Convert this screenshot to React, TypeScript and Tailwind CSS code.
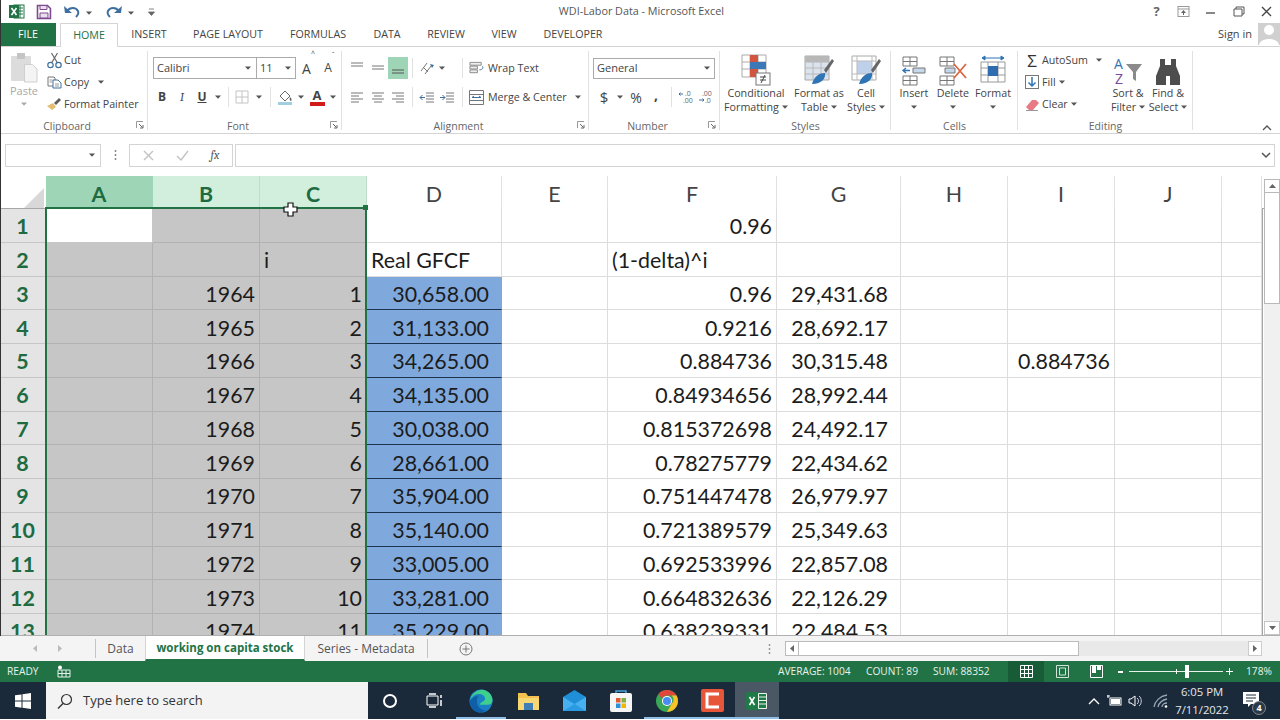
import React from 'react';

const Caret = ({ c = '#555' }: { c?: string }) => (
  <svg width="6" height="4" viewBox="0 0 6 4" className="inline-block shrink-0"><path d="M0 0.5h6L3 3.8z" fill={c} /></svg>
);

const XlLogo = ({ size = 17 }: { size?: number }) => (
  <svg width={size} height={size} viewBox="0 0 17 17">
    <rect x="6" y="2" width="10" height="13" fill="#fff" stroke="#217346" />
    <path d="M10 5h5M10 8h5M10 11h5M12 2v13" stroke="#217346" />
    <rect x="1" y="2" width="10" height="13" fill="#217346" />
    <path d="M3.5 5l5 7M8.5 5l-5 7" stroke="#fff" strokeWidth="1.6" />
  </svg>
);

const Launcher = () => (
  <svg width="8" height="8" viewBox="0 0 8 8" className="absolute right-[4px] top-[6px]">
    <path d="M0.5 7V0.5H7" fill="none" stroke="#999" />
    <path d="M3 3l3.5 3.5M7 4v3H4" fill="none" stroke="#666" />
  </svg>
);

const Group = ({ label, w, launcher, children }: { label: string; w: string; launcher?: boolean; children: React.ReactNode }) => (
  <div className={`relative flex h-full shrink-0 flex-col ${w}`}>
    <div className="min-h-0 flex-1">{children}</div>
    <div className={`relative h-[18px] text-center text-[10.5px] leading-[22px] text-[#666] ${launcher ? 'pr-[14px]' : ''}`}>
      {label}
      {launcher && <Launcher />}
    </div>
    <div className="absolute bottom-[3px] right-0 top-[4px] w-px bg-[#e1e1e1]" />
  </div>
);

const Sep = ({ ml }: { ml: string }) => <div className={`h-[20px] w-px shrink-0 bg-[#e1e1e1] ${ml}`} />;

const Lines = ({ d, c = '#777' }: { d: string; c?: string }) => (
  <svg width="16" height="14" viewBox="0 0 16 14"><path d={d} stroke={c} fill="none" /></svg>
);

const Slot = ({ w = 'w-[20px]', children }: { w?: string; children: React.ReactNode }) => (
  <div className={`flex h-full shrink-0 items-center justify-center ${w}`}>{children}</div>
);

const BigBtn = ({ w, icon, l1, l2, caret2, caret1 }: { w: string; icon: React.ReactNode; l1: string; l2?: string; caret1?: boolean; caret2?: boolean }) => (
  <div className={`flex shrink-0 flex-col items-center ${w}`}>
    <div className="flex h-[35px] items-end">{icon}</div>
    <div className="whitespace-nowrap text-[10.7px] leading-[14px] text-[#444]">{l1}</div>
    <div className="flex h-[14px] items-center gap-[3px] whitespace-nowrap text-[10.7px] leading-[14px] text-[#444]">
      {l2}
      {(caret2 || caret1) && <Caret />}
    </div>
  </div>
);

const tabs = [
  ['INSERT', 'w-[62px]'],
  ['PAGE LAYOUT', 'w-[96px]'],
  ['FORMULAS', 'w-[84px]'],
  ['DATA', 'w-[54px]'],
  ['REVIEW', 'w-[64px]'],
  ['VIEW', 'w-[52px]'],
  ['DEVELOPER', 'w-[86px]'],
];

const TitleBar = () => (
  <div className="flex h-[23px] items-center text-[#555]">
    <div className="ml-[8px] flex h-full items-center"><XlLogo /></div>
    <svg width="16" height="16" viewBox="0 0 16 16" className="ml-[11px]">
      <path d="M1.5 1.5h10l3 3v10h-13z" fill="none" stroke="#7b4a8c" strokeWidth="1.6" />
      <path d="M4 1.5h7v4H4zM4 9h8v5H4z" fill="#e9dff0" stroke="#7b4a8c" />
    </svg>
    <svg width="18" height="14" viewBox="0 0 18 14" className="ml-[11px]">
      <path d="M4 6c3-4 9-4 11 0 1 2 0 4-2 6" fill="none" stroke="#3f6f9f" strokeWidth="2" />
      <path d="M1 1l1 7h7z" fill="#3f6f9f" />
    </svg>
    <div className="ml-[5px]"><Caret /></div>
    <svg width="18" height="14" viewBox="0 0 18 14" className="ml-[13px]">
      <path d="M14 6C11 2 5 2 3 6c-1 2 0 4 2 6" fill="none" stroke="#3f6f9f" strokeWidth="2" />
      <path d="M17 1l-1 7H9z" fill="#3f6f9f" />
    </svg>
    <div className="ml-[5px]"><Caret /></div>
    <svg width="7" height="8" viewBox="0 0 7 8" className="ml-[14px]"><path d="M1 1h5M0.5 4h6L3.5 7.5z" stroke="#666" fill="#666" strokeWidth="0.8" /></svg>
    <div className="ml-[387px] w-[200px] whitespace-nowrap text-center text-[10.8px]">WDI-Labor Data - Microsoft Excel</div>
    <div className="ml-[402px] flex items-center">
      <div className="w-[27px] text-center text-[13px] font-bold text-[#666]">?</div>
      <svg width="27" height="11" viewBox="0 0 27 11"><rect x="8" y="0.5" width="11" height="10" fill="none" stroke="#999" /><path d="M8 3h11" stroke="#999" /><path d="M13.5 4l2.5 3h-5zM13 6.500h1V9h-1z" fill="#666" /></svg>
      <svg width="27" height="11" viewBox="0 0 27 11"><path d="M9 7h9" stroke="#555" strokeWidth="1.4" /></svg>
      <svg width="29" height="11" viewBox="0 0 29 11"><path d="M10 3h8v7h-8zM12 3V1h8v7h-2" fill="none" stroke="#555" /></svg>
      <svg width="27" height="11" viewBox="0 0 27 11"><path d="M9 1l9 9M18 1l-9 9" stroke="#444" strokeWidth="1.4" /></svg>
    </div>
  </div>
);

const TabRow = () => (
  <div className="flex h-[24px] items-stretch border-b border-[#d4d4d4] text-[10.7px]">
    <div className="flex w-[56px] items-center justify-center bg-[#217346] text-white">FILE</div>
    <div className="z-10 -mb-px ml-[4px] flex w-[58px] items-center justify-center border-x border-t border-[#d4d4d4] bg-white text-[#217346]">HOME</div>
    {tabs.map(([t, w]) => (
      <div key={t} className={`flex items-center justify-center text-[#444] ${w}`}>{t}</div>
    ))}
    <div className="flex-1" />
    <div className="flex items-center text-[11px] text-[#444]">Sign in</div>
    <svg width="22" height="22" viewBox="0 0 22 22" className="ml-[6px]">
      <rect width="22" height="22" fill="#d0d0d0" />
      <circle cx="11" cy="7" r="5" fill="#fff" />
      <path d="M1 22c1-8 19-8 20 0z" fill="#fff" />
    </svg>
  </div>
);

const Row2 = ({ children, className = '' }: { children: React.ReactNode; className?: string }) => (
  <div className={`flex h-[22px] items-center ${className}`}>{children}</div>
);

const SmallRow = ({ icon, label, caret, color = 'text-[#444]' }: { icon: React.ReactNode; label: string; caret?: string; color?: string }) => (
  <div className={`flex h-[22px] items-center text-[10.7px] ${color}`}>
    <div className="flex w-[18px] shrink-0 justify-center">{icon}</div>
    <span className="ml-[1px] whitespace-nowrap">{label}</span>
    {caret && <span className={`flex ${caret}`}><Caret /></span>}
  </div>
);

const Ribbon = () => (
  <div className="flex h-[87px] border-b border-[#d4d4d4] text-[#444]">
    <Group label="Clipboard" w="w-[148px]" launcher>
      <div className="flex pt-[2px]">
        <div className="flex w-[46px] flex-col items-center pl-[2px] pt-[4px] text-[11px] text-[#a8a8a8]">
          <svg width="28" height="30" viewBox="0 0 28 30">
            <rect x="1" y="3" width="20" height="25" rx="1" fill="#dcdcdc" />
            <rect x="7" y="0" width="8" height="6" fill="#c4c4c4" />
            <path d="M14.500 11.500h8l4.500 4.500v13h-12.500z" fill="#f4f4f4" stroke="#cfcfcf" />
          </svg>
          <div className="mt-[1px] leading-[14px]">Paste</div>
          <div className="mt-[4px] flex"><Caret c="#aaa" /></div>
        </div>
        <div className="-ml-[1px]">
          <SmallRow label="Cut" icon={<svg width="15" height="17" viewBox="0 0 15 17"><path d="M4.500 1l6 10M10.500 1l-6 10" stroke="#666" strokeWidth="1.200" fill="none" /><circle cx="3.500" cy="13" r="2.700" fill="none" stroke="#3f6f9f" strokeWidth="1.200" /><circle cx="11.500" cy="13" r="2.700" fill="none" stroke="#3f6f9f" strokeWidth="1.200" /></svg>} />
          <SmallRow label="Copy" caret="ml-[9px]" icon={<svg width="15" height="13" viewBox="0 0 15 13"><path d="M1 1h6l1 1v8H1z" fill="#fff" stroke="#777" /><path d="M6 4h5l3 3v5H6z" fill="#fff" stroke="#3f6f9f" /><path d="M2.500 4h3M2.500 6h3M8 8h4M8 10h4" stroke="#999" /></svg>} />
          <SmallRow label="Format Painter" icon={<svg width="16" height="14" viewBox="0 0 16 14"><path d="M1 9l6-3 3 4-4 3z" fill="#e2bd73" /><path d="M8 6l5-5 2 2-5 5z" fill="#5c5c5c" /></svg>} />
        </div>
      </div>
    </Group>

    <Group label="Font" w="w-[194px]" launcher>
      <div className="pl-[5px] pt-[10px]">
        <Row2>
          <div className="flex h-[22px] w-[104px] items-center justify-between border border-[#ababab] pl-[3px] pr-[5px] text-[11px]">Calibri<Caret /></div>
          <div className="-ml-px flex h-[22px] w-[40px] items-center justify-between border border-[#ababab] pl-[3px] pr-[4px] text-[11px]">11<Caret /></div>
          <div className="ml-[2px] flex w-[21px] justify-center text-[14px]">A<sup className="text-[7px]">^</sup></div>
          <div className="flex w-[21px] justify-center text-[12px] leading-[20px]">A<sup className="text-[7px]">ˇ</sup></div>
        </Row2>
        <Row2 className="mt-[7px]">
          <Slot w="w-[20px] ml-[-1px] font-bold text-[12px]">B</Slot>
          <Slot w="w-[20px] italic text-[12px] font-serif">I</Slot>
          <Slot w="w-[20px] underline text-[12px] font-bold">U</Slot>
          <Slot w="w-[12px]"><Caret /></Slot>
          <Sep ml="ml-[4px]" />
          <Slot w="w-[22px] ml-[2px]"><svg width="14" height="14" viewBox="0 0 14 14"><path d="M1 1h12v12H1zM7 1v12M1 7h12" fill="none" stroke="#c4c4c4" /></svg></Slot>
          <Slot w="w-[12px]"><Caret /></Slot>
          <Sep ml="ml-[5px]" />
          <Slot w="w-[24px] ml-[2px]"><svg width="16" height="16" viewBox="0 0 16 16"><path d="M3 7l5-5 5 5-5 5z" fill="#fff" stroke="#666" /><path d="M13 8c2 2 2 3 1 4-1 0-2-2-1-4z" fill="#666" /><rect x="1" y="13" width="14" height="3" fill="#9fcfe0" /></svg></Slot>
          <Slot w="w-[8px]"><Caret /></Slot>
          <Slot w="w-[22px] ml-[1px]"><div className="flex flex-col items-center"><span className="text-[13px] font-bold leading-[12px]">A</span><span className="mt-px h-[4px] w-[15px] bg-[#d11a1a]" /></div></Slot>
          <Slot w="w-[9px]"><Caret /></Slot>
        </Row2>
      </div>
    </Group>

    <Group label="Alignment" w="w-[247px]" launcher>
      <div className="pl-[5px] pt-[10px] text-[11px]">
        <Row2>
          <Slot w="w-[20px]"><Lines d="M2 2h12M2 5h12" /></Slot>
          <Slot w="w-[21px]"><Lines d="M2 5h12M2 8h12" /></Slot>
          <Slot w="w-[20px] bg-[#9fd5b7]"><Lines d="M2 9h12M2 12h12" c="#555" /></Slot>
          <Sep ml="ml-[4px]" />
          <Slot w="w-[18px] ml-[5px]"><svg width="16" height="14" viewBox="0 0 16 14"><path d="M2 10l6-8M6 13l6-8M4 6l5 5" stroke="#777" fill="none" /><path d="M11 3l4 1-2 3z" fill="#3f6f9f" /></svg></Slot>
          <Slot w="w-[11px]"><Caret /></Slot>
          <Sep ml="ml-[15px]" />
          <Slot w="w-[15px] ml-[6px]"><svg width="16" height="14" viewBox="0 0 16 14"><path d="M1 1h12v3H1zM1 5h8v3H1zM1 9h8v3H1z" fill="#eee" stroke="#888" /><path d="M14 5c2 2 0 4-3 4" stroke="#3f6f9f" fill="none" /></svg></Slot>
          <span className="ml-[4px] text-[10.7px]">Wrap Text</span>
        </Row2>
        <Row2 className="mt-[7px]">
          <Slot w="w-[20px]"><Lines d="M2 3h12M2 6h8M2 9h12M2 12h8" /></Slot>
          <Slot w="w-[21px]"><Lines d="M2 3h12M4 6h8M2 9h12M4 12h8" /></Slot>
          <Slot w="w-[20px]"><Lines d="M2 3h12M6 6h8M2 9h12M6 12h8" /></Slot>
          <Sep ml="ml-[4px]" />
          <Slot w="w-[20px] ml-[4px]"><svg width="16" height="14" viewBox="0 0 16 14"><path d="M7 3h8M7 6h8M7 9h8M7 12h8" stroke="#777" /><path d="M6 7.500H1M3.500 5L1 7.500 3.500 10" stroke="#3f6f9f" fill="none" /></svg></Slot>
          <Slot w="w-[20px]"><svg width="16" height="14" viewBox="0 0 16 14"><path d="M7 3h8M7 6h8M7 9h8M7 12h8" stroke="#777" /><path d="M1 7.500h5M3.500 5L6 7.500 3.500 10" stroke="#3f6f9f" fill="none" /></svg></Slot>
          <Sep ml="ml-[5px]" />
          <Slot w="w-[15px] ml-[6px]"><svg width="15" height="15" viewBox="0 0 15 15"><path d="M0.500 0.500h14v14H.5zM0.500 4.500h14M0.500 10.500h14" fill="none" stroke="#777" /><path d="M3 7.500h9M3 7.500l2-1.500M12 7.500l-2-1.500" stroke="#3f6f9f" fill="none" /></svg></Slot>
          <span className="ml-[4px] whitespace-nowrap text-[10.7px]">Merge &amp; Center</span>
          <span className="ml-[8px] flex"><Caret /></span>
        </Row2>
      </div>
    </Group>

    <Group label="Number" w="w-[131px]" launcher>
      <div className="pl-[4px] pt-[10px]">
        <Row2>
          <div className="flex h-[21px] w-[122px] items-center justify-between border border-[#ababab] pl-[3px] pr-[4px] text-[11px]">General<Caret /></div>
        </Row2>
        <Row2 className="mt-[7px]">
          <Slot w="w-[20px] ml-[1px] text-[15px]">$</Slot>
          <Slot w="w-[12px]"><Caret /></Slot>
          <Slot w="w-[20px] text-[14px]">%</Slot>
          <Slot w="w-[20px] pb-[6px] text-[14px] font-bold">,</Slot>
          <Sep ml="ml-[5px]" />
          <Slot w="w-[19px] ml-[5px]"><svg width="18" height="14" viewBox="0 0 18 14"><text x="7" y="6" fontSize="7" fill="#666">.0</text><text x="5" y="13" fontSize="7" fill="#666">.00</text><path d="M5 4H1M2.500 2.500L1 4l1.500 1.500" stroke="#3f6f9f" fill="none" /></svg></Slot>
          <Slot w="w-[20px]"><svg width="18" height="14" viewBox="0 0 18 14"><text x="5" y="6" fontSize="7" fill="#666">.00</text><text x="8" y="13" fontSize="7" fill="#666">.0</text><path d="M2 10h5M5.500 8.500L7 10l-1.500 1.500" stroke="#3f6f9f" fill="none" /></svg></Slot>
        </Row2>
      </div>
    </Group>

    <Group label="Styles" w="w-[171px]">
      <div className="flex pt-[4px]">
        <BigBtn w="w-[72px]" l1="Conditional" l2="Formatting" caret2 icon={
          <svg width="30" height="32" viewBox="0 0 30 32"><path d="M1 1h24v22H1zM9 1v22M17 1v22M1 8h24M1 15h24" fill="#fff" stroke="#aaa" /><path d="M9 1h8v7H9zM9 15h8v8H9z" fill="#d2553f" /><path d="M9 8h16v7H9z" fill="#3c78b5" /><rect x="15" y="19" width="14" height="12" fill="#fff" stroke="#777" /><path d="M19 23h6M19 26h6M24 21l-4 8" stroke="#444" /></svg>
        } />
        <BigBtn w="w-[54px]" l1="Format as" l2="Table" caret2 icon={
          <svg width="30" height="32" viewBox="0 0 30 32"><path d="M1 2h24v24H1z" fill="#dbe3ee" stroke="#aaa" /><path d="M1 8h24M1 14h24M1 20h24M9 2v24M17 2v24" stroke="#b8b8b8" /><path d="M1 2h24v6H1z" fill="#b8b8b8" /><path d="M20 16l8-11 2 2-8 12z" fill="#666" /><path d="M8 30c2-8 8-11 13-11 1 5-3 11-13 11z" fill="#2f74b5" /></svg>
        } />
        <BigBtn w="w-[40px]" l1="Cell" l2="Styles" caret2 icon={
          <svg width="30" height="32" viewBox="0 0 30 32"><path d="M1 2h24v24H1z" fill="#fff" stroke="#aaa" /><path d="M6 7h15v13H6z" fill="#bed0ea" /><path d="M1 7h24M1 20h24M6 2v24M21 2v24" stroke="#bbb" /><path d="M20 16l8-11 2 2-8 12z" fill="#666" /><path d="M8 30c2-8 8-11 13-11 1 5-3 11-13 11z" fill="#2f74b5" /></svg>
        } />
      </div>
    </Group>

    <Group label="Cells" w="w-[127px]">
      <div className="flex pt-[4px]">
        <BigBtn w="w-[46px]" l1="Insert" caret1 icon={
          <svg width="26" height="30" viewBox="0 0 26 30"><path d="M2 1h14v9H2zM9 1v9M2 5.500h14M2 20h14v9H2zM9 20v9M2 24.500h14" fill="#fff" stroke="#777" /><path d="M12 12h12v5H12z" fill="#c6d7ec" stroke="#777" /><path d="M9 14.500H2M5 12l-3 2.500L5 17" stroke="#2f74b5" strokeWidth="1.400" fill="none" /></svg>
        } />
        <BigBtn w="w-[32px]" l1="Delete" caret1 icon={
          <svg width="30" height="30" viewBox="0 0 30 30"><path d="M2 1h14v9H2zM9 1v9M2 5.500h14M2 20h14v9H2zM9 20v9M2 24.500h14" fill="#fff" stroke="#777" /><path d="M7 12h10v5H7z" fill="#c6d7ec" stroke="#777" /><path d="M16 8l12 14M28 8L16 22" stroke="#d9673f" strokeWidth="1.800" /></svg>
        } />
        <BigBtn w="w-[48px]" l1="Format" caret1 icon={
          <svg width="28" height="32" viewBox="0 0 28 32"><path d="M2 8h24v20H2zM9 8v20M19 8v20M2 14h24M2 21h24" fill="#fff" stroke="#999" /><path d="M9 12h10v10H9z" fill="#2f6db0" /><path d="M3 4h22M3 4l3-2v4zM25 4l-3-2v4z" stroke="#2f74b5" fill="#2f74b5" /></svg>
        } />
      </div>
    </Group>

    <Group label="Editing" w="w-[175px]">
      <div className="flex pt-[2px]">
        <div className="w-[90px] pl-[5px]">
          <SmallRow label="AutoSum" caret="ml-[8px]" icon={<span className="text-[17px] leading-none text-[#333]">Σ</span>} />
          <SmallRow label="Fill" caret="ml-[3px]" icon={<svg width="14" height="14" viewBox="0 0 14 14"><rect x="0.500" y="0.500" width="13" height="13" fill="#fff" stroke="#777" /><path d="M7 2v9M3.500 7.500L7 11l3.500-3.500" stroke="#2f74b5" strokeWidth="1.500" fill="none" /></svg>} />
          <SmallRow label="Clear" caret="ml-[3px]" icon={<svg width="15" height="13" viewBox="0 0 15 13"><path d="M1 9l6-7h4l3 3-6 7H4z" fill="#e87a86" /><path d="M1 12.500h12" stroke="#999" /></svg>} />
        </div>
        <div className="pt-[2px]">
          <BigBtn w="w-[40px]" l1="Sort &" l2="Filter" caret2 icon={
            <svg width="30" height="30" viewBox="0 0 30 30"><text x="1" y="13" fontSize="14" fill="#2f74b5">A</text><text x="2" y="28" fontSize="14" fill="#7a4a9c">Z</text><path d="M13 8h16l-6 8v9l-3-2v-7z" fill="#8a8a8a" /></svg>
          } />
        </div>
        <div className="pt-[2px]">
          <BigBtn w="w-[40px]" l1="Find &" l2="Select" caret2 icon={
            <svg width="26" height="28" viewBox="0 0 26 28"><path d="M5 1h5v6h6V1h5v7l4 10v9h-10v-9h-4v9H1v-9l4-10z" fill="#4d4d4d" /></svg>
          } />
        </div>
      </div>
    </Group>
    <div className="relative flex-1">
      <svg width="10" height="7" viewBox="0 0 10 7" className="absolute bottom-[1px] right-[8px]"><path d="M1 5l4-4 4 4" fill="none" stroke="#555" strokeWidth="1.300" /></svg>
    </div>
  </div>
);

const FormulaBar = () => (
  <div className="flex h-[42px] items-center gap-0 pl-[5px] pr-[5px]">
    <div className="flex h-[23px] w-[96px] items-center justify-end border border-[#d4d4d4] pr-[5px]"><Caret /></div>
    <div className="flex w-[28px] justify-center">
      <svg width="3" height="10" viewBox="0 0 3 10"><path d="M1.500 0v2M1.500 4v2M1.500 8v2" stroke="#888" strokeWidth="1.500" /></svg>
    </div>
    <div className="flex h-[23px] w-[104px] items-center border border-[#d4d4d4]">
      <Slot w="w-[34px] ml-[1px]"><svg width="11" height="11" viewBox="0 0 11 11"><path d="M1 1l9 9M10 1l-9 9" stroke="#c2c2c2" strokeWidth="1.400" /></svg></Slot>
      <Slot w="w-[34px]"><svg width="13" height="11" viewBox="0 0 13 11"><path d="M1 6l4 4 7-9" stroke="#c2c2c2" strokeWidth="1.400" fill="none" /></svg></Slot>
      <Slot w="w-[32px] font-serif italic text-[12px] text-[#555]">fx</Slot>
    </div>
    <div className="ml-[2px] flex h-[23px] flex-1 items-center justify-end border border-[#d4d4d4] pr-[3px]">
      <svg width="10" height="7" viewBox="0 0 10 7"><path d="M1 1l4 4 4-4" fill="none" stroke="#555" strokeWidth="1.500" /></svg>
    </div>
  </div>
);

const rows: string[][] = [
  ['', '', '', '', '', '0.96', '', '', '', '', ''],
  ['', '', 'i', 'Real GFCF', '', '(1-delta)^i', '', '', '', '', ''],
  ['', '1964', '1', '30,658.00', '', '0.96', '29,431.68', '', '', '', ''],
  ['', '1965', '2', '31,133.00', '', '0.9216', '28,692.17', '', '', '', ''],
  ['', '1966', '3', '34,265.00', '', '0.884736', '30,315.48', '', '0.884736', '', ''],
  ['', '1967', '4', '34,135.00', '', '0.84934656', '28,992.44', '', '', '', ''],
  ['', '1968', '5', '30,038.00', '', '0.815372698', '24,492.17', '', '', '', ''],
  ['', '1969', '6', '28,661.00', '', '0.78275779', '22,434.62', '', '', '', ''],
  ['', '1970', '7', '35,904.00', '', '0.751447478', '26,979.97', '', '', '', ''],
  ['', '1971', '8', '35,140.00', '', '0.721389579', '25,349.63', '', '', '', ''],
  ['', '1972', '9', '33,005.00', '', '0.692533996', '22,857.08', '', '', '', ''],
  ['', '1973', '10', '33,281.00', '', '0.664832636', '22,126.29', '', '', '', ''],
  ['', '1974', '11', '35,229.00', '', '0.638239331', '22,484.53', '', '', '', ''],
];

const headers = ['A', 'B', 'C', 'D', 'E', 'F', 'G', 'H', 'I', 'J', ''];

const headCls = (i: number) => {
  if (i === 0) return 'bg-[#9fd5b7] font-bold text-[#1f6b41] border-[#9fd5b7]';
  if (i < 3) return 'bg-[#d2eedd] font-bold text-[#1f6b41] border-[#bfdccb]';
  return 'bg-white text-[#444] border-[#e1e1e1]';
};

const cellCls = (r: number, c: number) => {
  if (c === 0 && r === 0) return 'bg-white border-[#c6c6c6]';
  if (c < 3) return 'bg-[#c6c6c6] border-[#b2b2b2]';
  if (c === 3 && r > 1) return 'bg-[#7fa9dd] border-r-[#7fa9dd] border-b-[#1e3350]';
  return 'bg-white border-[#dcdcdc]';
};

const isText = (v: string) => v === 'i' || v === 'Real GFCF' || v === '(1-delta)^i';

// D and G hold comma-styled numbers, which leave a wider gap on the right
const alignCls = (v: string, c: number) => {
  if (isText(v)) return 'justify-start pl-[4px]';
  return c === 3 || c === 6 ? 'justify-end pr-[12px]' : 'justify-end pr-[4px]';
};

const Sheet = () => (
  <div className="flex h-[459px] overflow-hidden">
    <div className="relative w-[1264px] shrink-0 font-['Lato',sans-serif] text-[21.4px] text-[#1c1c1c]">
      <div className="grid h-[32px] grid-cols-[46px_107px_107px_107px_135px_106px_169px_124px_107px_107px_107px_40px]">
        <div className="flex items-end justify-end pb-[2px] pr-[2px]">
          <div className="h-0 w-0 border-b-[20px] border-l-[20px] border-b-[#d8d8d8] border-l-transparent" />
        </div>
        {headers.map((h, i) => (
          <div key={i} className={`flex items-center justify-center border-r pt-[2px] ${headCls(i)}`}>{h}</div>
        ))}
      </div>
      <div className="grid grid-cols-[46px_107px_107px_107px_135px_106px_169px_124px_107px_107px_107px_40px] auto-rows-[33.75px] border-t border-[#a6a6a6]">
        {rows.map((row, r) => (
          <React.Fragment key={r}>
            <div className="flex items-center justify-center border-b border-r border-[#c6c6c6] bg-[#e4e4e4] pt-[2px] font-bold text-[#1f6b41]">{r + 1}</div>
            {row.map((v, c) => (
              <div key={c} className={`flex items-center overflow-visible whitespace-nowrap border-b border-r pt-[2px] ${alignCls(v, c)} ${cellCls(r, c)}`}>{v}</div>
            ))}
          </React.Fragment>
        ))}
      </div>
      {/* selection of A1:C13 */}
      <div className="absolute bottom-0 left-[45px] top-[31px] w-[322px] border-x-2 border-t-2 border-[#217346]" />
      <div className="absolute left-[363px] top-[29px] h-[5px] w-[5px] bg-[#217346]" />
      <svg width="15" height="15" viewBox="0 0 15 15" className="absolute left-[283px] top-[26px]">
        <path d="M5 1h5v4h4v5h-4v4H5v-4H1V5h4z" fill="#fff" stroke="#111" strokeWidth="1.200" />
      </svg>
      <div className="absolute bottom-0 left-[1262px] top-[32px] w-px bg-[#a6a6a6]" />
    </div>
    <div className="flex w-[16px] flex-col pt-[3px]">
      <div className="flex h-[14px] items-center justify-center border border-[#b8b8b8] bg-white"><svg width="7" height="4" viewBox="0 0 7 4"><path d="M0 4l3.500-4L7 4z" fill="#666" /></svg></div>
      <div className="h-[111px] border-x border-b border-[#b8b8b8] bg-white" />
      <div className="flex-1 bg-[#f0f0f0]" />
      <div className="flex h-[14px] items-center justify-center border border-[#c4c4c4] bg-white"><svg width="7" height="4" viewBox="0 0 7 4"><path d="M0 0l3.500 4L7 0z" fill="#666" /></svg></div>
    </div>
  </div>
);

const SheetTabs = () => (
  <div className="flex h-[26px] items-stretch border-t border-[#b0b0b0] bg-[#f4f4f4] text-[12px] text-[#555]">
    <div className="flex w-[95px] items-center justify-center gap-[21px]">
      <svg width="4" height="7" viewBox="0 0 4 7"><path d="M4 0L0 3.500 4 7z" fill="#bbb" /></svg>
      <svg width="4" height="7" viewBox="0 0 4 7"><path d="M0 0l4 3.500L0 7z" fill="#bbb" /></svg>
    </div>
    <div className="my-[3px] w-px bg-[#c4c4c4]" />
    <div className="flex w-[49px] items-center justify-center">Data</div>
    <div className="flex w-[160px] items-center justify-center border-b-2 border-x border-[#217346] border-x-[#d4d4d4] bg-white text-[11.5px] font-bold text-[#217346]">working on capita stock</div>
    <div className="flex w-[122px] items-center justify-center">Series - Metadata</div>
    <div className="my-[3px] w-px bg-[#c4c4c4]" />
    <div className="flex w-[76px] items-center justify-center">
      <svg width="14" height="14" viewBox="0 0 14 14"><circle cx="7" cy="7" r="6" fill="none" stroke="#777" /><path d="M7 3.500v7M3.500 7h7" stroke="#777" /></svg>
    </div>
    <div className="flex w-[281px] items-center justify-end pr-[14px]">
      <svg width="3" height="10" viewBox="0 0 3 10"><path d="M1.500 0v2M1.500 4v2M1.500 8v2" stroke="#999" strokeWidth="1.500" /></svg>
    </div>
    <div className="my-[5px] flex w-[477px] items-stretch">
      <div className="flex w-[14px] items-center justify-center border border-[#bbb] bg-white"><svg width="4" height="7" viewBox="0 0 4 7"><path d="M4 0L0 3.500 4 7z" fill="#666" /></svg></div>
      <div className="w-[280px] border-y border-r border-[#bbb] bg-white" />
      <div className="flex-1 bg-[#e9e9e9]" />
      <div className="flex w-[14px] items-center justify-center border border-[#ccc] bg-white"><svg width="4" height="7" viewBox="0 0 4 7"><path d="M0 0l4 3.500L0 7z" fill="#666" /></svg></div>
    </div>
  </div>
);

const StatusBar = () => (
  <div className="flex h-[21px] items-center bg-[#217346] text-[10.2px] text-[#e6f2ea]">
    <div className="ml-[7px] w-[48px]">READY</div>
    <svg width="14" height="13" viewBox="0 0 14 13" className="ml-[2px]"><path d="M1 5h12v7H1zM1 8.500h12M5 5v7M9 5v7" fill="none" stroke="#e6f2ea" /><circle cx="3" cy="2.500" r="2" fill="#fff" /></svg>
    <div className="ml-[707px] w-[73px] whitespace-nowrap">AVERAGE: 1004</div>
    <div className="ml-[15px] w-[52px] whitespace-nowrap">COUNT: 89</div>
    <div className="ml-[15px] w-[57px] whitespace-nowrap">SUM: 88352</div>
    <div className="ml-[18px] flex h-full w-[36px] items-center justify-center bg-[#185c37]">
      <svg width="13" height="13" viewBox="0 0 13 13"><path d="M.5.500h12v12H.5zM4.500.500v12M8.500.500v12M.5 4.500h12M.5 8.500h12" fill="none" stroke="#fff" /></svg>
    </div>
    <div className="flex h-full w-[36px] items-center justify-center">
      <svg width="13" height="13" viewBox="0 0 13 13"><path d="M.5.500h12v12H.5zM3.500 3h6v7h-6z" fill="none" stroke="#cfe5d7" /></svg>
    </div>
    <div className="flex h-full w-[32px] items-center justify-center">
      <svg width="13" height="13" viewBox="0 0 13 13"><path d="M.5.500h12v12H.5z" fill="#217346" stroke="#fff" /><path d="M2 1h4v7H2zM7 1h4v4H7z" fill="#fff" /></svg>
    </div>
    <div className="ml-[6px] flex items-center">
      <div className="h-[2px] w-[5px] bg-white" />
      <div className="relative ml-[6px] h-px w-[94px] bg-[#e6f2ea]">
        <div className="absolute left-[56px] top-[-6px] h-[13px] w-[4px] bg-white" />
        <div className="absolute left-[47px] top-[-2px] h-[5px] w-px bg-white" />
      </div>
      <div className="relative ml-[3px] h-[7px] w-[7px]">
        <div className="absolute left-0 top-[3px] h-px w-[7px] bg-white" />
        <div className="absolute left-[3px] top-0 h-[7px] w-px bg-white" />
      </div>
    </div>
    <div className="ml-[13px]">178%</div>
  </div>
);

const Underline = () => <div className="absolute bottom-0 left-0 right-0 h-[2px] bg-[#8fbfe6]" />;

const TaskIcon = ({ w, active, open, children }: { w: string; active?: boolean; open?: boolean; children: React.ReactNode }) => (
  <div className={`relative flex h-full shrink-0 items-center justify-center ${w} ${active ? 'bg-[#4a5765]' : ''}`}>
    {children}
    {open && <Underline />}
  </div>
);

const Taskbar = () => (
  <div className="flex h-[37px] items-stretch bg-[#1a2a3a] font-['Open_Sans',sans-serif] text-white">
    <div className="flex w-[46px] items-center justify-center">
      <svg width="16" height="16" viewBox="0 0 16 16"><path d="M0 2.300L6.500 1.400V7.500H0zM7.500 1.200L16 0v7.500H7.500zM0 8.500h6.500v6.200L0 13.800zM7.500 8.500H16V16l-8.500-1.200z" fill="#fff" /></svg>
    </div>
    <div className="flex w-[322px] items-center bg-[#f3f3f3] pl-[11px] text-[13px] text-[#333]">
      <svg width="16" height="16" viewBox="0 0 16 16"><circle cx="9.500" cy="6.500" r="5" fill="none" stroke="#333" strokeWidth="1.200" /><path d="M6 10.500L1 15.500" stroke="#333" strokeWidth="1.400" /></svg>
      <span className="ml-[10px]">Type here to search</span>
    </div>
    <TaskIcon w="w-[44px]"><div className="h-[14px] w-[14px] rounded-full border-2 border-white" /></TaskIcon>
    <TaskIcon w="w-[44px]">
      <svg width="17" height="15" viewBox="0 0 17 15"><path d="M1 3h11v9H1z" fill="none" stroke="#fff" /><path d="M3 1h7M3 14h7M15 2v3M15 7v6" stroke="#fff" strokeWidth="1.500" /></svg>
    </TaskIcon>
    <TaskIcon w="w-[50px]" open>
      <svg width="24" height="24" viewBox="0 0 24 24">
        <circle cx="12" cy="12" r="11.500" fill="#1b7fc4" />
        <path d="M1 12C2 4 9 0 14 .8c5 .7 9.500 5 9.500 10.500 0 3-2 4.500-5 4.500H11c0-3 4-3 5-5.300C16.500 7 13 4.500 9.500 5 5 5.500 2 8.500 1 12z" fill="#3ecf8e" />
        <path d="M8 13c0 5 4 8 9 8.500-4 2.500-9 2.500-12.500-.5C2 19 1 15 1 12c2-3 5-5 8-5-1 2-1 4-1 6z" fill="#0f5ea8" />
      </svg>
    </TaskIcon>
    <TaskIcon w="w-[44px]">
      <svg width="23" height="20" viewBox="0 0 23 20"><path d="M1 2h8l2 3h11v14H1z" fill="#f2c14e" /><path d="M1 7h21v12H1z" fill="#f7d774" /><rect x="7" y="12" width="9" height="7" fill="#3f7fb5" /></svg>
    </TaskIcon>
    <TaskIcon w="w-[48px]">
      <svg width="23" height="21" viewBox="0 0 23 21"><path d="M0 7L11.500 0 23 7v14H0z" fill="#1f8fd8" /><path d="M0 7l11.500 7L23 7v14H0z" fill="#47b0ee" /><path d="M0 21l11.500-7L23 21z" fill="#2a9ae2" /></svg>
    </TaskIcon>
    <TaskIcon w="w-[46px]">
      <svg width="22" height="23" viewBox="0 0 22 23"><path d="M6 5V2h10v3" fill="none" stroke="#4aa3df" strokeWidth="1.500" /><rect x="0" y="4" width="22" height="19" rx="2" fill="#f5f5f5" /><rect x="6" y="9" width="4.500" height="4.500" fill="#e05a33" /><rect x="11.500" y="9" width="4.500" height="4.500" fill="#7cb342" /><rect x="6" y="14.500" width="4.500" height="4.500" fill="#2f8fd8" /><rect x="11.500" y="14.500" width="4.500" height="4.500" fill="#f4b400" /></svg>
    </TaskIcon>
    <TaskIcon w="w-[46px]" open>
      <svg width="22" height="22" viewBox="0 0 22 22">
        <circle cx="11" cy="11" r="11" fill="#3aa757" />
        <path d="M11 0a11 11 0 0 1 9.500 5.500H11a5.500 5.500 0 0 0-5 3L2.300 4.200A11 11 0 0 1 11 0z" fill="#e0463a" />
        <path d="M20.500 5.500A11 11 0 0 1 11 22l4.700-8.200a5.500 5.500 0 0 0 0-8.300z" fill="#f8c228" />
        <circle cx="11" cy="11" r="5" fill="#fff" /><circle cx="11" cy="11" r="4" fill="#4a8af4" />
      </svg>
    </TaskIcon>
    <TaskIcon w="w-[45px]" open>
      <svg width="23" height="23" viewBox="0 0 23 23"><rect width="23" height="23" rx="2" fill="#e8563a" /><path d="M18 5H6v13h12" fill="none" stroke="#fff" strokeWidth="3" /></svg>
    </TaskIcon>
    <TaskIcon w="w-[44px]" active open>
      <svg width="22" height="18" viewBox="0 0 22 18">
        <rect x="0" y="0" width="15" height="18" rx="2" fill="#1f7a47" />
        <path d="M3.500 5l5 8M8.500 5l-5 8" stroke="#fff" strokeWidth="1.600" />
        <path d="M12.500 1.500h8v15h-8zM12.500 5h8M12.500 8.500h8M12.500 12h8" fill="#1f7a47" stroke="#e8f4ec" />
      </svg>
    </TaskIcon>
    <div className="flex flex-1 items-center justify-end">
      <svg width="12" height="8" viewBox="0 0 12 8"><path d="M1 7l5-5 5 5" fill="none" stroke="#fff" strokeWidth="1.300" /></svg>
      <svg width="16" height="11" viewBox="0 0 16 11" className="ml-[6px]"><rect x="4" y="3" width="11" height="7" fill="none" stroke="#fff" /><rect x="5" y="4" width="9" height="5" fill="#fff" /><path d="M1 1h3M2 0v3" stroke="#fff" /></svg>
      <svg width="15" height="14" viewBox="0 0 15 14" className="ml-[6px]"><path d="M1 5h2l4-3v10L3 9H1z" fill="none" stroke="#fff" /><path d="M9 4c2 1 2 5 0 6M11 2c3 2 3 8 0 10" fill="none" stroke="#ccd" /></svg>
      <svg width="15" height="14" viewBox="0 0 15 14" className="ml-[10px]"><path d="M1 13C2 7 7 2 14 1M5 13c1-4 4-7 9-8M9 13c0-2 2-4 5-4" fill="none" stroke="#9aa7b4" strokeWidth="1.300" /><circle cx="13" cy="12.500" r="1.300" fill="#fff" /></svg>
      <div className="ml-[1px] w-[66px] text-center text-[11.3px] leading-[18px] text-[#e4e8ec]">
        <div className="whitespace-nowrap">6:05 PM</div>
        <div className="whitespace-nowrap">7/11/2022</div>
      </div>
      <div className="relative ml-[7px] mr-[14px] h-[26px] w-[24px]">
        <svg width="18" height="17" viewBox="0 0 18 17" className="absolute left-0 top-[3px]"><path d="M1 1h16v12H9l-3 3v-3H1z" fill="#fff" /><path d="M4 4h10M4 7h10M4 10h7" stroke="#1a2a3a" /></svg>
        <div className="absolute left-[10px] top-[13px] flex h-[14px] w-[14px] items-center justify-center rounded-full border border-[#888] bg-[#2b3a49] text-[9px] font-bold">4</div>
      </div>
    </div>
  </div>
);

export default function App() {
  return (
    <div className="relative flex h-[720px] w-[1280px] flex-col overflow-hidden bg-white font-['Open_Sans',sans-serif]">
      <TitleBar />
      <TabRow />
      <Ribbon />
      <FormulaBar />
      <Sheet />
      <SheetTabs />
      <StatusBar />
      <Taskbar />
      <div className="absolute left-0 top-0 h-[636px] w-px bg-[#333]" />
    </div>
  );
}
